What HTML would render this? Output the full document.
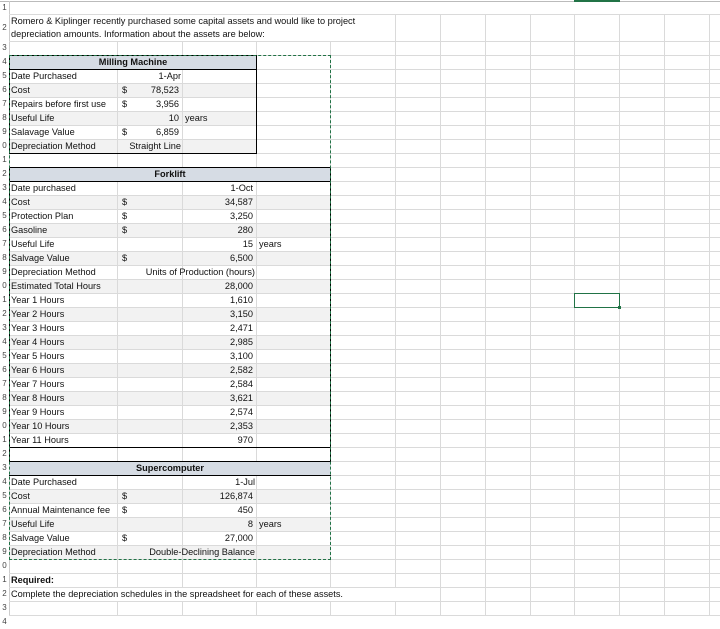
<!DOCTYPE html>
<html><head><meta charset="utf-8"><style>
*{margin:0;padding:0;box-sizing:border-box}
body{width:720px;height:616px;background:#fff;position:relative;overflow:hidden;font-family:"Liberation Sans",sans-serif;font-size:9.2px;color:#111}
.hl{position:absolute;left:9px;width:711px;height:1px;background:#dadada}
.vl{position:absolute;width:1px;background:#dadada;top:14px;height:602px}
.t{position:absolute;white-space:nowrap;line-height:14px;height:14px}
.r{text-align:right}
.c{text-align:center}
.rn{position:absolute;left:0;width:9px;font-size:8px;line-height:14px;color:#444;text-align:center;overflow:hidden}
.fill{position:absolute;background:#f2f2f2}
.hdr{position:absolute;background:#d6dce4;border-top:1px solid #000;border-bottom:1px solid #000}
.b{font-weight:bold}
</style></head><body>
<div style="position:absolute;left:0;top:1px;width:720px;height:1px;background:#bbb"></div>
<div style="position:absolute;left:574px;top:0;width:46px;height:2px;background:#217346"></div>
<div style="position:absolute;left:9px;top:1px;width:1px;height:615px;background:#ccc"></div>

<div class="fill" style="left:10px;top:83px;width:246px;height:14px"></div>
<div class="fill" style="left:10px;top:111px;width:246px;height:14px"></div>
<div class="fill" style="left:10px;top:139px;width:246px;height:14px"></div>
<div id="ff"></div>

<div class="hl" style="top:14px"></div>
<div class="hl" style="top:41px"></div>
<div id="grid"></div>
<script>
(function(){
var g='';
for(var y=55;y<616;y+=14)g+='<div class="hl" style="top:'+y+'px"></div>';
[117,182,256,330,395,440,485,530,574,619,664,709].forEach(function(x){g+='<div class="vl" style="left:'+x+'px"></div>'});
var f='';
for(var r=14;r<=30;r+=2)f+='<div class="fill" style="left:10px;top:'+(41+(r-3)*14)+'px;width:320px;height:14px"></div>';
for(var r=35;r<=39;r+=2)f+='<div class="fill" style="left:10px;top:'+(41+(r-3)*14)+'px;width:320px;height:14px"></div>';
var n='';
for(var r=1;r<=44;r++){var ty=r==1?1:(r==2?14:41+(r-3)*14);var hh=r==2?27:14;n+='<div class="rn" style="top:'+ty+'px;height:'+hh+'px;line-height:'+hh+'px">'+(r%10)+'</div>';}
document.getElementById('grid').innerHTML=g+n;
document.getElementById('ff').innerHTML=f;
})();
</script>
<div style="position:absolute;left:10px;top:15px;width:384px;height:26px;background:#fff"></div>
<div class="t" style="left:11px;top:14px">Romero &amp; Kiplinger recently purchased some capital assets and would like to project</div>
<div class="t" style="left:11px;top:27px">depreciation amounts. Information about the assets are below:</div>

<!-- Milling -->
<div class="hdr" style="left:9px;top:55px;width:248px;height:15px"></div>
<div style="position:absolute;left:9px;top:55px;width:248px;height:99px;border:1px solid #000"></div>
<div class="t c b" style="left:9px;top:55px;width:248px">Milling Machine</div>
<div class="t" style="left:11px;top:69px">Date Purchased</div><div class="t r" style="left:117px;top:69px;width:64px">1-Apr</div>
<div class="t" style="left:11px;top:83px">Cost</div><div class="t" style="left:122px;top:83px">$</div><div class="t r" style="left:117px;top:83px;width:62px">78,523</div>
<div class="t" style="left:11px;top:97px">Repairs before first use</div><div class="t" style="left:122px;top:97px">$</div><div class="t r" style="left:117px;top:97px;width:62px">3,956</div>
<div class="t" style="left:11px;top:111px">Useful Life</div><div class="t r" style="left:117px;top:111px;width:62px">10</div><div class="t" style="left:185px;top:111px">years</div>
<div class="t" style="left:11px;top:125px">Salavage Value</div><div class="t" style="left:122px;top:125px">$</div><div class="t r" style="left:117px;top:125px;width:62px">6,859</div>
<div class="t" style="left:11px;top:139px">Depreciation Method</div><div class="t r" style="left:117px;top:139px;width:64px">Straight Line</div>

<!-- Forklift -->
<div class="hdr" style="left:9px;top:167px;width:322px;height:15px"></div>
<div style="position:absolute;left:9px;top:167px;width:322px;height:281px;border:1px solid #000"></div>
<div class="t c b" style="left:9px;top:167px;width:322px">Forklift</div>
<div id="fk"></div>
<script>
(function(){
var rows=[["Date purchased","","1-Oct"],["Cost","$","34,587"],["Protection Plan","$","3,250"],["Gasoline","$","280"],["Useful Life","","15"],["Salvage Value","$","6,500"],["Depreciation Method","","Units of Production (hours)"],["Estimated Total Hours","","28,000"],["Year 1 Hours","","1,610"],["Year 2 Hours","","3,150"],["Year 3 Hours","","2,471"],["Year 4 Hours","","2,985"],["Year 5 Hours","","3,100"],["Year 6 Hours","","2,582"],["Year 7 Hours","","2,584"],["Year 8 Hours","","3,621"],["Year 9 Hours","","2,574"],["Year 10 Hours","","2,353"],["Year 11 Hours","","970"]];
var h='';rows.forEach(function(r,i){var y=181+i*14;h+='<div class="t" style="left:11px;top:'+y+'px">'+r[0]+'</div>';if(r[1])h+='<div class="t" style="left:122px;top:'+y+'px">$</div>';h+='<div class="t r" style="left:117px;top:'+y+'px;width:'+(r[2].length>10?138:136)+'px">'+r[2]+'</div>';});
h+='<div class="t" style="left:259px;top:237px">years</div>';
document.getElementById('fk').innerHTML=h;
})();
</script>
<div style="position:absolute;left:9px;top:447px;width:322px;height:15px;border-left:1px solid #000;border-right:1px solid #000;border-bottom:1px solid #000"></div>

<!-- Supercomputer -->
<div class="hdr" style="left:9px;top:461px;width:322px;height:15px"></div>
<div class="t c b" style="left:9px;top:461px;width:322px">Supercomputer</div>
<div class="t" style="left:11px;top:475px">Date Purchased</div><div class="t r" style="left:117px;top:475px;width:138px">1-Jul</div>
<div class="t" style="left:11px;top:489px">Cost</div><div class="t" style="left:122px;top:489px">$</div><div class="t r" style="left:117px;top:489px;width:136px">126,874</div>
<div class="t" style="left:11px;top:503px">Annual Maintenance fee</div><div class="t" style="left:122px;top:503px">$</div><div class="t r" style="left:117px;top:503px;width:136px">450</div>
<div class="t" style="left:11px;top:517px">Useful Life</div><div class="t r" style="left:117px;top:517px;width:136px">8</div><div class="t" style="left:259px;top:517px">years</div>
<div class="t" style="left:11px;top:531px">Salvage Value</div><div class="t" style="left:122px;top:531px">$</div><div class="t r" style="left:117px;top:531px;width:136px">27,000</div>
<div class="t" style="left:11px;top:545px">Depreciation Method</div><div class="t r" style="left:117px;top:545px;width:138px">Double-Declining Balance</div>

<div style="position:absolute;left:9px;top:55px;width:322px;height:505px;border:1px dashed #217346"></div>

<div class="t b" style="left:11px;top:573px">Required:</div>
<div style="position:absolute;left:10px;top:588px;width:400px;height:13px;background:#fff"></div>
<div class="t" style="left:11px;top:587px">Complete the depreciation schedules in the spreadsheet for each of these assets.</div>

<div style="position:absolute;left:574px;top:293px;width:46px;height:15px;border:1px solid #217346"></div>
<div style="position:absolute;left:618px;top:306px;width:3px;height:3px;background:#217346"></div>
</body></html>
